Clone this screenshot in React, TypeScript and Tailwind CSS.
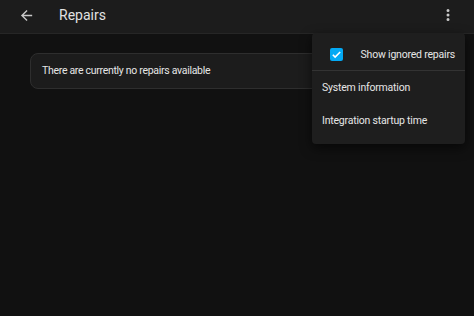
import { useState } from 'react';

export default function App() {
  const [showIgnored, setShowIgnored] = useState(true);

  return (
    <div className="relative w-[474px] h-[316px] overflow-hidden bg-[#111111] text-[#e1e1e1] font-['Roboto','Liberation_Sans',sans-serif]">
      {/* Top bar */}
      <header className="flex items-center h-[34px] pb-[3px] bg-[#1c1c1c] border-b border-[#262626]">
        <button className="flex items-center justify-center w-[17px] h-[17px] ml-[18px] text-[#c8c8c8]">
          <svg viewBox="0 0 24 24" className="w-[17px] h-[17px]" fill="currentColor">
            <path d="M20 11v2H8l5.5 5.5-1.42 1.42L4.16 12l7.92-7.92L13.5 5.5 8 11h12z" />
          </svg>
        </button>
        <h1 className="ml-[24px] text-[14px] leading-none text-[#e1e1e1]">Repairs</h1>
        <div className="flex-1" />
        <button className="flex items-center justify-center w-[18px] h-[18px] mr-[17px] text-[#c8c8c8]">
          <svg viewBox="0 0 24 24" className="w-[18px] h-[18px]" fill="currentColor">
            <path d="M12 16a2 2 0 0 1 2 2 2 2 0 0 1-2 2 2 2 0 0 1-2-2 2 2 0 0 1 2-2m0-6a2 2 0 0 1 2 2 2 2 0 0 1-2 2 2 2 0 0 1-2-2 2 2 0 0 1 2-2m0-6a2 2 0 0 1 2 2 2 2 0 0 1-2 2 2 2 0 0 1-2-2 2 2 0 0 1 2-2z" />
          </svg>
        </button>
      </header>

      {/* Content */}
      <main className="px-[30px] pt-[19px]">
        <div className="flex items-center h-[36px] px-[11px] rounded-[8px] bg-[#1c1c1c] border border-[#2e2e2e]">
          <span className="text-[10.5px] tracking-[-0.3px] text-[#e6e6e6]">There are currently no repairs available</span>
        </div>
      </main>

      {/* Overflow menu */}
      <div className="absolute top-[33px] left-[312px] w-[153px] pt-[6px] pb-[7px] rounded-[4px] bg-[#1e1e1e] shadow-[0_4px_12px_rgba(0,0,0,0.6)]">
        <button
          onClick={() => setShowIgnored(!showIgnored)}
          className="flex items-center w-full h-[31px] pl-[18px] pr-[10px]"
        >
          <span className={`flex items-center justify-center w-[13px] h-[13px] rounded-[2px] ${showIgnored ? 'bg-[#03a9f4]' : 'border-2 border-[#9e9e9e]'}`}>
            {showIgnored && (
              <svg viewBox="0 0 24 24" className="w-[11px] h-[11px]" fill="none" stroke="white" strokeWidth="3.5">
                <path d="M4 12.5l5 5L20 6.5" />
              </svg>
            )}
          </span>
          <span className="ml-[18px] text-[10.5px] tracking-[-0.2px] text-[#e6e6e6] whitespace-nowrap">Show ignored repairs</span>
        </button>
        <div className="h-px bg-[#333333]" />
        <div className="flex items-center h-[33px] px-[10px] text-[10.5px] tracking-[-0.2px] text-[#e6e6e6]">System information</div>
        <div className="flex items-center h-[33px] px-[10px] text-[10.5px] tracking-[-0.2px] text-[#e6e6e6]">Integration startup time</div>
      </div>
    </div>
  );
}
